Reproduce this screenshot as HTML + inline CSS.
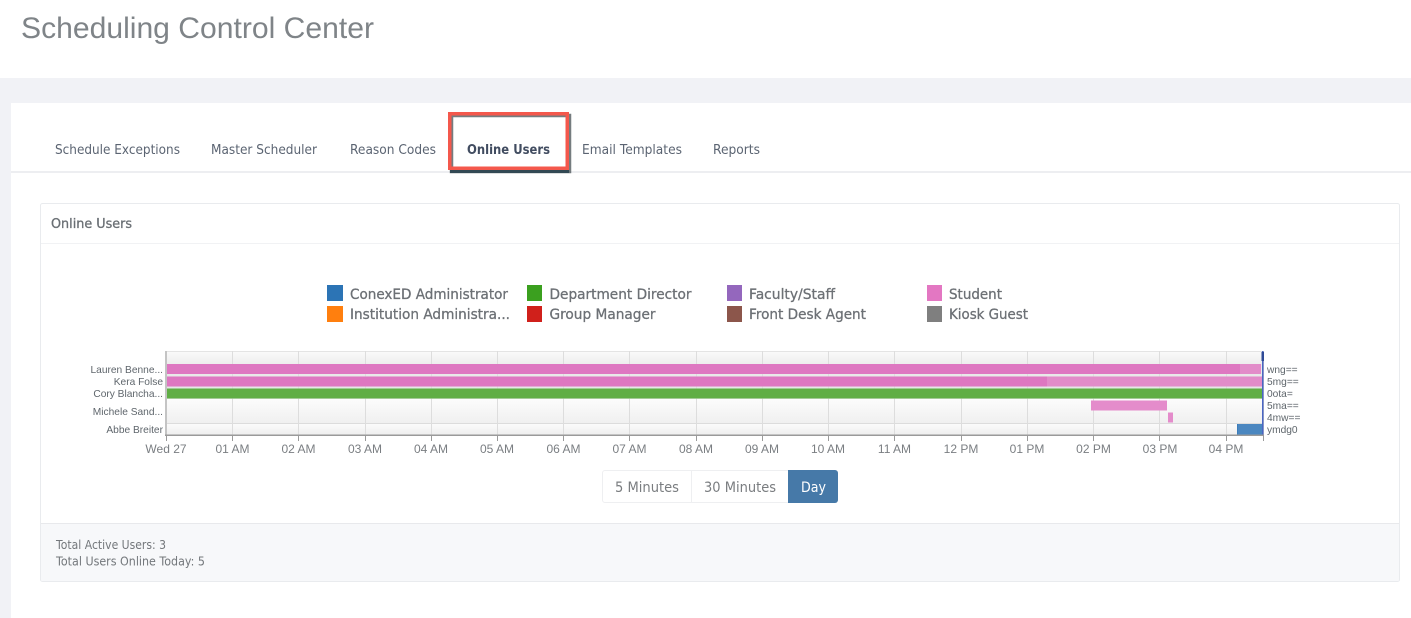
<!DOCTYPE html>
<html>
<head>
<meta charset="utf-8">
<title>Scheduling Control Center</title>
<style>
html,body{margin:0;padding:0;background:#fff;width:1411px;height:618px;overflow:hidden}
svg{display:block}
text{font-family:"Liberation Sans",Arial,sans-serif}
.o{font-family:"DejaVu Sans","Liberation Sans",sans-serif}
</style>
</head>
<body>
<svg width="1411" height="618" viewBox="0 0 1411 618" xmlns="http://www.w3.org/2000/svg">
<defs>
<linearGradient id="band" x1="0" y1="0" x2="0" y2="1">
<stop offset="0" stop-color="#fbfbfb"/><stop offset="1" stop-color="#eeeeee"/>
</linearGradient>
<linearGradient id="band2" x1="0" y1="0" x2="0" y2="1">
<stop offset="0" stop-color="#fcfcfc"/><stop offset="1" stop-color="#f0f0f0"/>
</linearGradient>
</defs>
<rect width="1411" height="618" fill="#fff"/>
<rect y="78" width="1411" height="25" fill="#f1f2f6"/>
<rect y="103" width="11" height="515" fill="#f1f2f6"/>

<text x="21" y="38" font-size="30" fill="#7f8488" textLength="353" lengthAdjust="spacingAndGlyphs">Scheduling Control Center</text>

<!-- tabs -->
<rect x="11" y="171" width="1400" height="2" fill="#edeef1"/>
<g font-size="13.500" fill="#5b6472">
<text class="o" x="55" y="154" font-size="13.500" textLength="125" lengthAdjust="spacingAndGlyphs">Schedule Exceptions</text>
<text class="o" x="211" y="154" font-size="13.500" textLength="106" lengthAdjust="spacingAndGlyphs">Master Scheduler</text>
<text class="o" x="350" y="154" font-size="13.500" textLength="86" lengthAdjust="spacingAndGlyphs">Reason Codes</text>
<text class="o" x="582" y="154" font-size="13.500" textLength="100" lengthAdjust="spacingAndGlyphs">Email Templates</text>
<text class="o" x="713" y="154" font-size="13.500" textLength="47" lengthAdjust="spacingAndGlyphs">Reports</text>
</g>
<!-- highlight box -->
<rect x="450" y="170" width="119" height="3" fill="#1f5570"/>
<rect x="451.500" y="115.500" width="118" height="56" fill="none" stroke="#3a4448" stroke-width="3.500" opacity=".7"/>
<rect x="449.750" y="113.750" width="117.500" height="54.500" fill="none" stroke="#f4584c" stroke-width="3.500"/>
<text class="o" x="467" y="154" font-size="13.500" font-weight="bold" fill="#414c60" textLength="83" lengthAdjust="spacingAndGlyphs">Online Users</text>

<!-- card -->
<rect x="40.500" y="203.500" width="1359" height="378" rx="2" fill="#fff" stroke="#e9ebee"/>
<rect x="41" y="243" width="1358" height="1" fill="#f1f2f4"/>
<text class="o" x="51" y="228" font-size="13" fill="#6a6f74" stroke="#6a6f74" stroke-width=".3" textLength="81" lengthAdjust="spacingAndGlyphs">Online Users</text>
<path d="M41 523.500H1399V579a2 2 0 0 1-2 2H43a2 2 0 0 1-2-2Z" fill="#f7f8fa"/>
<rect x="41" y="523" width="1358" height="1" fill="#e8e9ec"/>
<text class="o" x="56" y="549" font-size="12.500" fill="#73777b" textLength="110" lengthAdjust="spacingAndGlyphs">Total Active Users: 3</text>
<text class="o" x="56" y="565.500" font-size="12.500" fill="#73777b" textLength="149" lengthAdjust="spacingAndGlyphs">Total Users Online Today: 5</text>

<!-- legend -->
<g>
<rect x="327" y="285" width="16" height="16" fill="#2c74b5"/>
<rect x="527" y="285" width="15" height="16" fill="#3ba01f"/>
<rect x="727" y="285" width="15" height="16" fill="#9467bd"/>
<rect x="927" y="285" width="15" height="16" fill="#e377c2"/>
<rect x="327" y="306" width="16" height="16" fill="#ff7f0e"/>
<rect x="527" y="306" width="15" height="16" fill="#d0201b"/>
<rect x="727" y="306" width="15" height="16" fill="#8c564b"/>
<rect x="927" y="306" width="15" height="16" fill="#7f7f7f"/>
</g>
<g font-size="14.500" fill="#6c7075" stroke="#6c7075" stroke-width=".3">
<text class="o" x="350" y="299" textLength="158" lengthAdjust="spacingAndGlyphs">ConexED Administrator</text>
<text class="o" x="549.500" y="299" textLength="142" lengthAdjust="spacingAndGlyphs">Department Director</text>
<text class="o" x="749" y="299" textLength="86" lengthAdjust="spacingAndGlyphs">Faculty/Staff</text>
<text class="o" x="949" y="299" textLength="53" lengthAdjust="spacingAndGlyphs">Student</text>
<text class="o" x="350" y="319" textLength="160" lengthAdjust="spacingAndGlyphs">Institution Administra...</text>
<text class="o" x="549.500" y="319" textLength="106" lengthAdjust="spacingAndGlyphs">Group Manager</text>
<text class="o" x="749" y="319" textLength="117" lengthAdjust="spacingAndGlyphs">Front Desk Agent</text>
<text class="o" x="949" y="319" textLength="79" lengthAdjust="spacingAndGlyphs">Kiosk Guest</text>
</g>

<!-- chart bands -->
<rect x="166" y="351" width="1097" height="13" fill="url(#band)"/>
<rect x="166" y="364" width="1097" height="12" fill="#e9e9e9"/>
<rect x="166" y="376" width="1097" height="12" fill="#e6e6e6"/>
<rect x="166" y="388" width="1097" height="12" fill="#e6e6e6"/>
<rect x="166" y="399" width="1097" height="24" fill="url(#band2)"/>
<rect x="166" y="423" width="1097" height="1" fill="#dcdcdc"/>
<rect x="166" y="424" width="1097" height="11" fill="url(#band)"/>
<rect x="166" y="351" width="1097" height="1" fill="#e4e4e4"/>
<!-- grid -->
<g fill="#dddddd">
<rect x="232" y="351" width="1" height="84"/><rect x="298" y="351" width="1" height="84"/><rect x="365" y="351" width="1" height="84"/><rect x="431" y="351" width="1" height="84"/><rect x="497" y="351" width="1" height="84"/><rect x="563" y="351" width="1" height="84"/><rect x="629" y="351" width="1" height="84"/><rect x="696" y="351" width="1" height="84"/><rect x="762" y="351" width="1" height="84"/><rect x="828" y="351" width="1" height="84"/><rect x="894" y="351" width="1" height="84"/><rect x="961" y="351" width="1" height="84"/><rect x="1027" y="351" width="1" height="84"/><rect x="1093" y="351" width="1" height="84"/><rect x="1159" y="351" width="1" height="84"/><rect x="1226" y="351" width="1" height="84"/>
</g>
<!-- bars -->
<rect x="166" y="364" width="1095" height="10" fill="#e28cc9"/>
<rect x="166" y="364" width="1074" height="10" fill="#de77c1"/>
<rect x="166" y="376.500" width="1096" height="10" fill="#e28cc9"/>
<rect x="166" y="376.500" width="881" height="10" fill="#de77c1"/>
<rect x="166" y="388.500" width="1097" height="10" fill="#60ae45"/>
<rect x="1091" y="400.500" width="76" height="10" fill="#e48ccb"/>
<rect x="1168" y="412.500" width="5" height="10" fill="#e48ccb"/>
<rect x="1237" y="424" width="26" height="10.500" fill="#4b87c0"/>
<rect x="1237" y="424" width="1" height="10.500" fill="#3b7dbb"/>
<!-- axis -->
<rect x="165" y="351" width="2" height="84" fill="#c4c4c4"/>
<rect x="1263" y="351" width="1" height="84" fill="#c8c8c8"/>
<rect x="1262" y="351" width="1.500" height="84" fill="#4a66c4"/>
<rect x="1261.500" y="352" width="2.500" height="9" fill="#2f4a96"/>
<rect x="165" y="434.500" width="1099" height="1.500" fill="#9a9a9a"/>
<g fill="#9a9a9a">
<rect x="166" y="436" width="1" height="5"/><rect x="232" y="436" width="1" height="5"/><rect x="298" y="436" width="1" height="5"/><rect x="365" y="436" width="1" height="5"/><rect x="431" y="436" width="1" height="5"/><rect x="497" y="436" width="1" height="5"/><rect x="563" y="436" width="1" height="5"/><rect x="629" y="436" width="1" height="5"/><rect x="696" y="436" width="1" height="5"/><rect x="762" y="436" width="1" height="5"/><rect x="828" y="436" width="1" height="5"/><rect x="894" y="436" width="1" height="5"/><rect x="961" y="436" width="1" height="5"/><rect x="1027" y="436" width="1" height="5"/><rect x="1093" y="436" width="1" height="5"/><rect x="1159" y="436" width="1" height="5"/><rect x="1226" y="436" width="1" height="5"/><rect x="1263" y="436" width="1" height="5"/>
</g>
<!-- y labels -->
<g font-size="10.200" fill="#5f666c" text-anchor="end">
<text x="163" y="373">Lauren Benne...</text>
<text x="163" y="385">Kera Folse</text>
<text x="163" y="397">Cory Blancha...</text>
<text x="163" y="415">Michele Sand...</text>
<text x="163" y="433">Abbe Breiter</text>
</g>
<g font-size="10.200" fill="#5f666c">
<text x="1267" y="373">wng==</text>
<text x="1267" y="385">5mg==</text>
<text x="1267" y="397">0ota=</text>
<text x="1267" y="409">5ma==</text>
<text x="1267" y="421">4mw==</text>
<text x="1267" y="433">ymdg0</text>
</g>
<!-- x labels -->
<g font-size="12" fill="#7a7e82" text-anchor="middle">
<text x="166" y="453">Wed 27</text><text x="232.500" y="453">01 AM</text><text x="298.500" y="453">02 AM</text><text x="365" y="453">03 AM</text><text x="431" y="453">04 AM</text><text x="497" y="453">05 AM</text><text x="563.500" y="453">06 AM</text><text x="629.500" y="453">07 AM</text><text x="696" y="453">08 AM</text><text x="762" y="453">09 AM</text><text x="828" y="453">10 AM</text><text x="894.500" y="453">11 AM</text><text x="961" y="453">12 PM</text><text x="1027" y="453">01 PM</text><text x="1093.500" y="453">02 PM</text><text x="1160" y="453">03 PM</text><text x="1226" y="453">04 PM</text>
</g>

<!-- buttons -->
<rect x="602.500" y="470.500" width="235" height="32" rx="2.500" fill="#fff" stroke="#eeeff1"/>
<rect x="691" y="471" width="1" height="32" fill="#eeeff1"/>
<path d="M788 470H835a3 3 0 0 1 3 3V500a3 3 0 0 1-3 3H788Z" fill="#4679a8"/>
<g font-size="14.500">
<text class="o" x="615" y="492" fill="#7a7d80" textLength="64" lengthAdjust="spacingAndGlyphs">5 Minutes</text>
<text class="o" x="704" y="492" fill="#7a7d80" textLength="72" lengthAdjust="spacingAndGlyphs">30 Minutes</text>
<text class="o" x="801" y="492" fill="#fff" textLength="25" lengthAdjust="spacingAndGlyphs">Day</text>
</g>
</svg>
</body>
</html>
